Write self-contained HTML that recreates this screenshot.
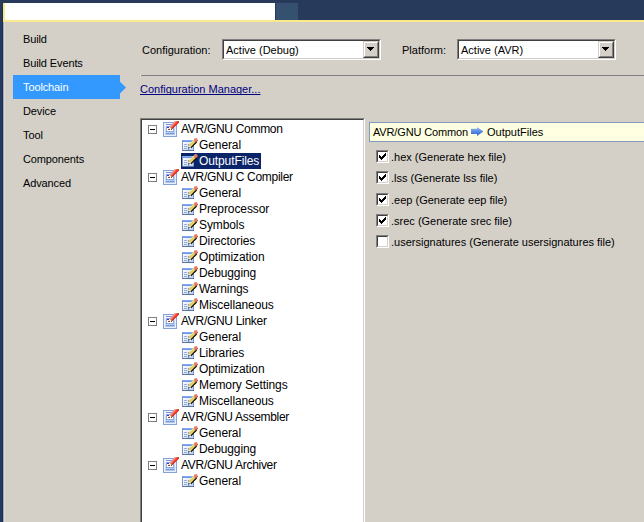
<!DOCTYPE html>
<html><head><meta charset="utf-8">
<style>
*{margin:0;padding:0;box-sizing:border-box}
html,body{width:644px;height:522px;overflow:hidden;background:#d4d0c8}
body{position:relative;font-family:"Liberation Sans",sans-serif;font-size:11px;color:#000}
.a{position:absolute}
.t{position:absolute;white-space:nowrap;line-height:13px;height:13px}
.tr{font-size:12px;letter-spacing:-0.1px;line-height:14px;height:14px}
.cb{position:absolute;width:159px;height:21px;background:#fff;border-top:1px solid #808080;border-left:1px solid #808080;border-right:1px solid #fff;border-bottom:1px solid #fff}
.cb .in{position:absolute;left:0;top:0;right:0;bottom:0;border-top:1px solid #404040;border-left:1px solid #404040;border-right:1px solid #d4d0c8;border-bottom:1px solid #d4d0c8}
.cb .btn{position:absolute;right:0;top:0;width:16px;height:17px;background:#d4d0c8;border-top:1px solid #d4d0c8;border-left:1px solid #d4d0c8;border-right:1px solid #404040;border-bottom:1px solid #404040}
.cb .btn .bi{position:absolute;left:0;top:0;right:0;bottom:0;border-top:1px solid #fff;border-left:1px solid #fff;border-right:1px solid #808080;border-bottom:1px solid #808080}
.chk{position:absolute;left:376px;width:13px;height:13px;background:#fff;border-top:1px solid #808080;border-left:1px solid #808080;border-right:1px solid #fff;border-bottom:1px solid #fff}
.chk .in{position:absolute;left:0;top:0;right:0;bottom:0;border-top:1px solid #404040;border-left:1px solid #404040;border-right:1px solid #d4d0c8;border-bottom:1px solid #d4d0c8}
.exp{position:absolute;left:148px;width:9px;height:9px;background:#fff;border:1px solid #808080}
.exp:after{content:"";position:absolute;left:1px;top:3px;width:5px;height:1px;background:#000}
</style></head><body>
<svg width="0" height="0" style="position:absolute">
<defs>
 <linearGradient id="g0" x1="0" y1="0" x2="0.3" y2="1"><stop offset="0" stop-color="#fbfdff"/><stop offset="1" stop-color="#aac7f0"/></linearGradient>
 <linearGradient id="g1" x1="0" y1="0" x2="1" y2="1"><stop offset="0" stop-color="#ffffff"/><stop offset="1" stop-color="#bcd3f2"/></linearGradient>
 <linearGradient id="gt" x1="0" y1="0" x2="0" y2="1"><stop offset="0" stop-color="#94b8f2"/><stop offset="1" stop-color="#5a8ae2"/></linearGradient>
 <symbol id="ic0" viewBox="0 0 17 16">
  <rect x="1" y="1" width="14" height="15" fill="#8aa3d5"/>
  <rect x="2" y="2" width="12" height="13" fill="#e9f0fb"/>
  <rect x="3" y="3" width="10" height="11" fill="url(#g0)"/>
  <rect x="4" y="3" width="8" height="1" fill="#7b98d0"/>
  <rect x="4" y="5" width="8" height="6" fill="#8caadf"/>
  <rect x="5" y="6" width="6" height="4" fill="#fff"/>
  <rect x="5" y="6" width="2" height="1" fill="#1c3ff0"/>
  <rect x="4" y="12" width="8" height="1" fill="#7b98d0"/>
  <polygon points="7.6,6 13.2,0 17,0 17,1.4 10,8.3" fill="#ec4a36"/>
  <polygon points="7.6,6 13.2,0 14.8,0 8.6,7" fill="#f59a90"/>
  <polygon points="9.4,7.7 17,0.2 17,1.4 10,8.3" fill="#c43222"/>
  <polygon points="7.6,6.2 9.6,8.2 6.2,8.6" fill="#f8e6c4"/>
  <rect x="6" y="8" width="1" height="1" fill="#705040"/>
  <rect x="7" y="8" width="1" height="1" fill="#d83020"/>
  <rect x="9" y="8" width="1" height="1" fill="#903020"/>
 </symbol>
 <symbol id="ic1" viewBox="0 0 17 16">
  <rect x="1" y="3" width="12" height="11" fill="#7d96c6"/>
  <rect x="2" y="3" width="10" height="2" fill="url(#gt)"/>
  <rect x="2" y="5" width="10" height="8" fill="url(#g1)"/>
  <rect x="1" y="13" width="12" height="1" fill="#5a72a6"/>
  <rect x="3" y="7" width="3" height="1" fill="#9aaccf"/>
  <rect x="3" y="9" width="3" height="1" fill="#9aaccf"/>
  <rect x="3" y="11" width="3" height="1" fill="#9aaccf"/>
  <rect x="7" y="7" width="5" height="6" fill="#7688b0"/>
  <rect x="8" y="8" width="4" height="5" fill="#c4d6f0"/>
  <polygon points="7.6,8.0 12.8,2.8 15.4,5.4 10.2,10.6" fill="#e6cc60"/>
  <line x1="8" y1="7.6" x2="13" y2="2.6" stroke="#f8f0b8" stroke-width="0.9"/>
  <line x1="9.8" y1="10.8" x2="15.6" y2="5" stroke="#000" stroke-width="1.1"/>
  <circle cx="14.8" cy="3" r="1.9" fill="#e08272"/>
  <path d="M16.5 3.2 A1.9 1.9 0 0 1 14.4 4.8" stroke="#b04040" stroke-width="1" fill="none"/>
  <polygon points="7.4,8.2 10,10.8 7.6,10.8" fill="#fff"/>
  <rect x="7.4" y="10" width="1.2" height="1" fill="#333"/>
 </symbol>
</defs></svg>
<!-- top bar -->
<div class="a" style="left:0;top:0;width:644px;height:20px;background:#283a5c"></div>
<div class="a" style="left:0;top:0;width:3px;height:522px;background:#283a5c"></div>
<div class="a" style="left:2px;top:3px;width:1px;height:519px;background:#1f2f52"></div>
<div class="a" style="left:3px;top:20px;width:641px;height:2px;background:#fbe98e"></div>
<div class="a" style="left:3px;top:3px;width:2px;height:19px;background:#fbe98e"></div>
<div class="a" style="left:5px;top:3px;width:270px;height:17px;background:#fff"></div>
<div class="a" style="left:276px;top:3px;width:22px;height:17px;background:#36506f"></div>
<div class="a" style="left:3px;top:22px;width:1px;height:500px;background:#9ca8cc"></div>
<div class="a" style="left:4px;top:22px;width:1px;height:500px;background:#dedacf"></div>

<!-- left nav -->
<svg class="a" style="left:0;top:0" width="140" height="110"><polygon points="13,75 120,75 120,81.8 126,87.6 120,93.4 120,99 13,99" fill="#3399ff"/></svg>
<div class="t" style="letter-spacing:-0.12px;left:23px;top:33px">Build</div>
<div class="t" style="letter-spacing:-0.12px;left:23px;top:57px">Build Events</div>
<div class="t" style="letter-spacing:-0.12px;left:23px;top:81px;color:#fff">Toolchain</div>
<div class="t" style="letter-spacing:-0.12px;left:23px;top:105px">Device</div>
<div class="t" style="letter-spacing:-0.12px;left:23px;top:129px">Tool</div>
<div class="t" style="letter-spacing:-0.12px;left:23px;top:153px">Components</div>
<div class="t" style="letter-spacing:-0.12px;left:23px;top:177px">Advanced</div>

<!-- config row -->
<div class="t" style="left:142px;top:44px">Configuration:</div>
<div class="cb" style="left:222px;top:39px"><div class="in"><div class="t" style="left:2px;top:3px">Active (Debug)</div><div class="btn"><div class="bi"></div><svg class="a" style="left:-1px;top:-1px" width="16" height="16"><path d="M4 6h7v1h-1v1h-1v1h-1v1h-1v-1h-1v-1h-1v-1h-1z" fill="#000"/></svg></div></div></div>
<div class="t" style="left:402px;top:44px">Platform:</div>
<div class="cb" style="left:457px;top:39px"><div class="in"><div class="t" style="left:2px;top:3px">Active (AVR)</div><div class="btn"><div class="bi"></div><svg class="a" style="left:-1px;top:-1px" width="16" height="16"><path d="M4 6h7v1h-1v1h-1v1h-1v1h-1v-1h-1v-1h-1v-1h-1z" fill="#000"/></svg></div></div></div>
<div class="a" style="left:140px;top:75px;width:504px;height:1px;background:#808080"></div>
<div class="a" style="left:140px;top:75px;width:1px;height:1px;background:#fff"></div>
<div class="t" style="left:140px;top:83px;color:#000080;text-decoration:underline;text-decoration-skip-ink:none">Configuration Manager...</div>

<!-- tree box -->
<div class="a" style="left:140px;top:118px;width:225px;height:410px;background:#fff;border-top:1px solid #808080;border-left:1px solid #808080;border-right:1px solid #fff">
 <div class="a" style="left:0;top:0;right:0;bottom:0;border-top:1px solid #404040;border-left:1px solid #404040;border-right:1px solid #d4d0c8"></div>
</div>
<div class="exp" style="top:125px"></div>
<svg class="a" style="left:162px;top:121px" width="17" height="16"><use href="#ic0"/></svg>
<div class="t tr" style="left:181px;top:122px;letter-spacing:-0.3px">AVR/GNU Common</div>
<svg class="a" style="left:181px;top:137px" width="17" height="16"><use href="#ic1"/></svg>
<div class="t tr" style="left:199px;top:138px">General</div>
<div class="a" style="left:181px;top:153px;width:80px;height:16px;background:#0a246a"></div>
<svg class="a" style="left:181px;top:153px" width="17" height="16"><use href="#ic1"/></svg>
<div class="t tr" style="left:199px;top:154px;color:#fff">OutputFiles</div>
<div class="exp" style="top:173px"></div>
<svg class="a" style="left:162px;top:169px" width="17" height="16"><use href="#ic0"/></svg>
<div class="t tr" style="left:181px;top:170px;letter-spacing:-0.3px">AVR/GNU C Compiler</div>
<svg class="a" style="left:181px;top:185px" width="17" height="16"><use href="#ic1"/></svg>
<div class="t tr" style="left:199px;top:186px">General</div>
<svg class="a" style="left:181px;top:201px" width="17" height="16"><use href="#ic1"/></svg>
<div class="t tr" style="left:199px;top:202px">Preprocessor</div>
<svg class="a" style="left:181px;top:217px" width="17" height="16"><use href="#ic1"/></svg>
<div class="t tr" style="left:199px;top:218px">Symbols</div>
<svg class="a" style="left:181px;top:233px" width="17" height="16"><use href="#ic1"/></svg>
<div class="t tr" style="left:199px;top:234px">Directories</div>
<svg class="a" style="left:181px;top:249px" width="17" height="16"><use href="#ic1"/></svg>
<div class="t tr" style="left:199px;top:250px">Optimization</div>
<svg class="a" style="left:181px;top:265px" width="17" height="16"><use href="#ic1"/></svg>
<div class="t tr" style="left:199px;top:266px">Debugging</div>
<svg class="a" style="left:181px;top:281px" width="17" height="16"><use href="#ic1"/></svg>
<div class="t tr" style="left:199px;top:282px">Warnings</div>
<svg class="a" style="left:181px;top:297px" width="17" height="16"><use href="#ic1"/></svg>
<div class="t tr" style="left:199px;top:298px">Miscellaneous</div>
<div class="exp" style="top:317px"></div>
<svg class="a" style="left:162px;top:313px" width="17" height="16"><use href="#ic0"/></svg>
<div class="t tr" style="left:181px;top:314px;letter-spacing:-0.3px">AVR/GNU Linker</div>
<svg class="a" style="left:181px;top:329px" width="17" height="16"><use href="#ic1"/></svg>
<div class="t tr" style="left:199px;top:330px">General</div>
<svg class="a" style="left:181px;top:345px" width="17" height="16"><use href="#ic1"/></svg>
<div class="t tr" style="left:199px;top:346px">Libraries</div>
<svg class="a" style="left:181px;top:361px" width="17" height="16"><use href="#ic1"/></svg>
<div class="t tr" style="left:199px;top:362px">Optimization</div>
<svg class="a" style="left:181px;top:377px" width="17" height="16"><use href="#ic1"/></svg>
<div class="t tr" style="left:199px;top:378px">Memory Settings</div>
<svg class="a" style="left:181px;top:393px" width="17" height="16"><use href="#ic1"/></svg>
<div class="t tr" style="left:199px;top:394px">Miscellaneous</div>
<div class="exp" style="top:413px"></div>
<svg class="a" style="left:162px;top:409px" width="17" height="16"><use href="#ic0"/></svg>
<div class="t tr" style="left:181px;top:410px;letter-spacing:-0.3px">AVR/GNU Assembler</div>
<svg class="a" style="left:181px;top:425px" width="17" height="16"><use href="#ic1"/></svg>
<div class="t tr" style="left:199px;top:426px">General</div>
<svg class="a" style="left:181px;top:441px" width="17" height="16"><use href="#ic1"/></svg>
<div class="t tr" style="left:199px;top:442px">Debugging</div>
<div class="exp" style="top:461px"></div>
<svg class="a" style="left:162px;top:457px" width="17" height="16"><use href="#ic0"/></svg>
<div class="t tr" style="left:181px;top:458px;letter-spacing:-0.3px">AVR/GNU Archiver</div>
<svg class="a" style="left:181px;top:473px" width="17" height="16"><use href="#ic1"/></svg>
<div class="t tr" style="left:199px;top:474px">General</div>
<!-- right panel -->
<div class="a" style="left:369px;top:122px;width:300px;height:20px;background:#ffffe1;border:1px solid #7f9db9"></div>
<div class="t" style="left:373px;top:126px;letter-spacing:-0.15px">AVR/GNU Common</div>
<svg class="a" style="left:470px;top:127px" width="15" height="10"><defs><linearGradient id="ga" x1="0" y1="0" x2="0" y2="1"><stop offset="0" stop-color="#a4c4f4"/><stop offset="0.45" stop-color="#5d8fe6"/><stop offset="1" stop-color="#2d5fcc"/></linearGradient></defs><polygon points="1,1.8 7,1.8 7,0 13.5,4.5 7,9 7,6.9 1,6.9" fill="url(#ga)"/></svg>
<div class="t" style="left:487px;top:126px">OutputFiles</div>

<div class="chk" style="top:150px"><div class="in"><svg class="a" style="left:0;top:0" width="9" height="9"><path d="M7 1h1v1h-1zM6 2h2v1h-2zM1 3h1v1h-1zM5 3h3v1h-3zM1 4h2v1h-2zM4 4h3v1h-3zM1 5h5v1h-5zM2 6h3v1h-3zM3 7h1v1h-1z" fill="#000"/></svg></div></div>
<div class="t" style="left:391px;top:151px">.hex (Generate hex file)</div>
<div class="chk" style="top:171px"><div class="in"><svg class="a" style="left:0;top:0" width="9" height="9"><path d="M7 1h1v1h-1zM6 2h2v1h-2zM1 3h1v1h-1zM5 3h3v1h-3zM1 4h2v1h-2zM4 4h3v1h-3zM1 5h5v1h-5zM2 6h3v1h-3zM3 7h1v1h-1z" fill="#000"/></svg></div></div>
<div class="t" style="left:391px;top:172px">.lss (Generate lss file)</div>
<div class="chk" style="top:193px"><div class="in"><svg class="a" style="left:0;top:0" width="9" height="9"><path d="M7 1h1v1h-1zM6 2h2v1h-2zM1 3h1v1h-1zM5 3h3v1h-3zM1 4h2v1h-2zM4 4h3v1h-3zM1 5h5v1h-5zM2 6h3v1h-3zM3 7h1v1h-1z" fill="#000"/></svg></div></div>
<div class="t" style="left:391px;top:194px">.eep (Generate eep file)</div>
<div class="chk" style="top:214px"><div class="in"><svg class="a" style="left:0;top:0" width="9" height="9"><path d="M7 1h1v1h-1zM6 2h2v1h-2zM1 3h1v1h-1zM5 3h3v1h-3zM1 4h2v1h-2zM4 4h3v1h-3zM1 5h5v1h-5zM2 6h3v1h-3zM3 7h1v1h-1z" fill="#000"/></svg></div></div>
<div class="t" style="left:391px;top:215px">.srec (Generate srec file)</div>
<div class="chk" style="top:235px"><div class="in"></div></div>
<div class="t" style="left:391px;top:236px">.usersignatures (Generate usersignatures file)</div>
</body></html>
